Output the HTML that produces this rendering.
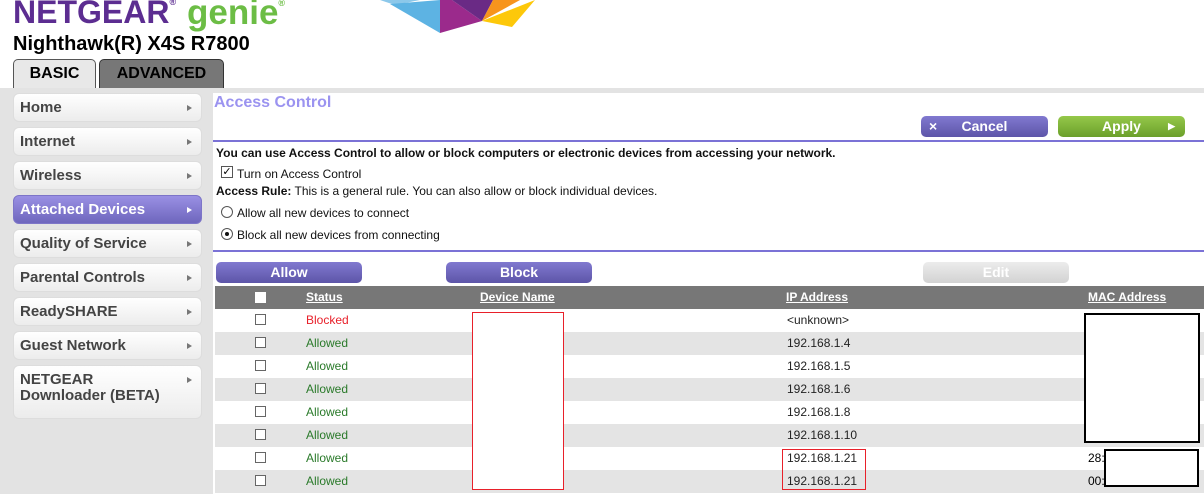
<!DOCTYPE html>
<html><head><meta charset="utf-8"><style>
*{margin:0;padding:0;box-sizing:border-box}
body{width:1204px;height:494px;overflow:hidden;background:#fff;font-family:"Liberation Sans",Arial,sans-serif;position:relative}
.a{position:absolute;white-space:nowrap}
.nav{position:absolute;left:13px;width:189px;height:29px;border-radius:6px;background:linear-gradient(#fff,#ececec);border:1px solid #ddd;font-weight:bold;font-size:15px;color:#444;padding:5px 0 0 6px}
.nav::after{content:"";position:absolute;right:9px;top:11px;border-left:5px solid #777;border-top:3.5px solid transparent;border-bottom:3.5px solid transparent}
.nav.on{background:linear-gradient(#9a90e4,#6e66bd);color:#fff;border-color:#7d75c8}
.nav.on::after{border-left-color:#fff}
.btn{position:absolute;height:21px;border-radius:5px;color:#fff;font-weight:bold;font-size:14px;text-align:center;line-height:21px}
.pur{background:linear-gradient(#8179d0,#5d55a8)}
.row{position:absolute;left:215px;width:989px;height:23px;font-size:12px}
.cb{position:absolute;left:40px;top:5px;width:11px;height:11px;border:1px solid #666;background:#fff}
.st{position:absolute;left:91px;top:4px;color:#2a7a2a}
.ip{position:absolute;left:572px;top:4px;color:#222}
.hd span{position:absolute;top:4px;text-decoration:underline}
</style></head><body>
<div class="a" style="left:13px;top:-6px;font-size:32px;font-weight:bold;color:#5c2d91">NETGEAR<sup style="font-size:9px;vertical-align:18px">®</sup></div>
<div class="a" style="left:187px;top:-7px;font-size:35px;font-weight:bold;color:#6cbd45">genie<sup style="font-size:9px;vertical-align:18px">®</sup></div>
<svg class="a" style="left:370px;top:0" width="180" height="40"><polygon points="10,0 50,0 25,5" fill="#8cc8ea"/><polygon points="20,4 70,0 70,33" fill="#5db3e3"/><polygon points="70,0 82,0 112,21 70,33" fill="#9b2a8c"/><polygon points="82,0 123,0 112,21" fill="#6a2a85"/><polygon points="123,0 150,0 112,21" fill="#f7941d"/><polygon points="112,21 165,0 142,27" fill="#fdc80a"/></svg>
<div class="a" style="left:13px;top:33px;font-size:20px;font-weight:bold;color:#000">Nighthawk(R) X4S R7800</div>
<div class="a" style="left:13px;top:59px;height:30px;border:1px solid #555;border-bottom:none;border-radius:5px 5px 0 0;background:#e8e8e8;font-size:16px;font-weight:bold;text-align:center;padding-top:5px;width:83px">BASIC</div>
<div class="a" style="left:99px;top:59px;width:125px;height:30px;border:1px solid #333;border-bottom:none;border-radius:5px 5px 0 0;background:#777;font-size:16px;font-weight:bold;text-align:center;padding-top:5px">ADVANCED</div>
<div class="a" style="left:0;top:88px;width:1204px;height:5px;background:#e3e3e3"></div>
<div class="a" style="left:0;top:88px;width:213px;height:406px;background:#e3e3e3"></div>
<div class="nav" style="top:93px">Home</div>
<div class="nav" style="top:127px">Internet</div>
<div class="nav" style="top:161px">Wireless</div>
<div class="nav on" style="top:195px">Attached Devices</div>
<div class="nav" style="top:229px">Quality of Service</div>
<div class="nav" style="top:263px">Parental Controls</div>
<div class="nav" style="top:297px">ReadySHARE</div>
<div class="nav" style="top:331px">Guest Network</div>
<div class="nav" style="top:365px;height:54px;line-height:16px;padding-top:6px">NETGEAR<br>Downloader (BETA)</div>
<div class="a" style="left:214px;top:94px;font-size:16px;font-weight:bold;color:#9b93f0">Access Control</div>
<div class="btn pur" style="left:921px;top:116px;width:127px"><span style="position:absolute;left:8px">×</span>Cancel</div>
<div class="btn" style="left:1058px;top:116px;width:127px;background:linear-gradient(#95c84a,#6b9f2a)">Apply<span style="position:absolute;right:10px;top:0;font-size:9px">▶</span></div>
<div class="a" style="left:213px;top:140px;width:991px;height:2px;background:#7b72d6"></div>
<div class="a" style="left:216px;top:146px;font-size:12px;font-weight:bold;color:#111">You can use Access Control to allow or block computers or electronic devices from accessing your network.</div>
<div class="a" style="left:221px;top:166px;width:12px;height:12px;border:1px solid #555;font-size:11px;line-height:10px;text-align:center">✓</div>
<div class="a" style="left:237px;top:167px;font-size:12px;color:#111">Turn on Access Control</div>
<div class="a" style="left:216px;top:184px;font-size:12px;color:#111"><b>Access Rule:</b> This is a general rule. You can also allow or block individual devices.</div>
<div class="a" style="left:221px;top:206px;width:12px;height:12px;border:1px solid #555;border-radius:50%"></div>
<div class="a" style="left:237px;top:206px;font-size:12px;color:#111">Allow all new devices to connect</div>
<div class="a" style="left:221px;top:228px;width:12px;height:12px;border:1px solid #555;border-radius:50%"><div style="margin:3px;width:4px;height:4px;border-radius:50%;background:#111"></div></div>
<div class="a" style="left:237px;top:228px;font-size:12px;color:#111">Block all new devices from connecting</div>
<div class="a" style="left:213px;top:250px;width:991px;height:2px;background:#7b72d6"></div>
<div class="btn pur" style="left:216px;top:262px;width:146px">Allow</div>
<div class="btn pur" style="left:446px;top:262px;width:146px">Block</div>
<div class="btn" style="left:923px;top:262px;width:146px;background:linear-gradient(#ececec,#d2d2d2);color:#fff">Edit</div>
<div class="row hd" style="top:286px;height:23px;background:#777;color:#fff;font-weight:bold">
<div style="position:absolute;left:40px;top:6px;width:11px;height:11px;background:#fff"></div>
<span style="left:91px">Status</span><span style="left:265px">Device Name</span><span style="left:571px">IP Address</span><span style="left:873px">MAC Address</span></div>
<div class="row" style="top:309px"><div class="cb"></div><span class="st" style="color:#e8202a">Blocked</span><span class="ip">&lt;unknown&gt;</span></div>
<div class="row" style="top:332px;background:#e4e4e4"><div class="cb"></div><span class="st">Allowed</span><span class="ip">192.168.1.4</span></div>
<div class="row" style="top:355px"><div class="cb"></div><span class="st">Allowed</span><span class="ip">192.168.1.5</span></div>
<div class="row" style="top:378px;background:#e4e4e4"><div class="cb"></div><span class="st">Allowed</span><span class="ip">192.168.1.6</span></div>
<div class="row" style="top:401px"><div class="cb"></div><span class="st">Allowed</span><span class="ip">192.168.1.8</span></div>
<div class="row" style="top:424px;background:#e4e4e4"><div class="cb"></div><span class="st">Allowed</span><span class="ip">192.168.1.10</span></div>
<div class="row" style="top:447px"><div class="cb"></div><span class="st">Allowed</span><span class="ip">192.168.1.21</span><span style="position:absolute;left:873px;top:4px">28:</span></div>
<div class="row" style="top:470px;background:#e4e4e4"><div class="cb"></div><span class="st">Allowed</span><span class="ip">192.168.1.21</span><span style="position:absolute;left:873px;top:4px">00:</span></div>
<div class="a" style="left:472px;top:312px;width:92px;height:178px;border:1px solid #e8202a;background:#fff"></div>
<div class="a" style="left:782px;top:449px;width:84px;height:41px;border:1px solid #e8202a"></div>
<div class="a" style="left:1084px;top:313px;width:116px;height:130px;border:2px solid #000;background:#fff"></div>
<div class="a" style="left:1104px;top:449px;width:95px;height:38px;border:2px solid #000;background:#fff"></div>
</body></html>
